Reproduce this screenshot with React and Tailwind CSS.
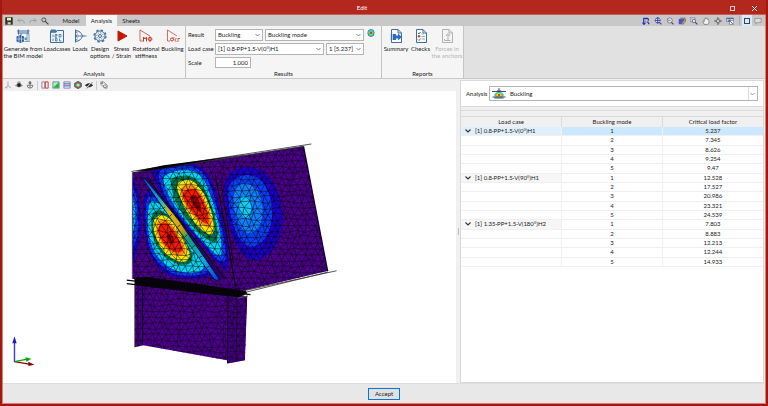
import React from "react";

/* ---------- geometry helpers for the finite element view ---------- */

// Closed smooth curve through a list of points.
function blob(points) {
  const n = points.length;
  let d = `M${points[0][0]} ${points[0][1]}`;
  for (let i = 0; i < n; i++) {
    const a = points[(i + n - 1) % n];
    const b = points[i];
    const c = points[(i + 1) % n];
    const e = points[(i + 2) % n];
    d += `C${b[0] + (c[0] - a[0]) / 6} ${b[1] + (c[1] - a[1]) / 6} ${c[0] - (e[0] - b[0]) / 6} ${c[1] - (e[1] - b[1]) / 6} ${c[0]} ${c[1]}`;
  }
  return d + "Z";
}

// Jittered triangular mesh covering a rectangle.
function mesh(x0, y0, x1, y1, step, seed) {
  let s = seed;
  const rnd = () => {
    s = (s * 1103515245 + 12345) % 2147483648;
    return s / 2147483648 - 0.5;
  };
  const rows = [];
  const h = step * 0.88;
  for (let y = y0, r = 0; y <= y1 + h; y += h, r++) {
    const row = [];
    for (let x = x0 - step; x <= x1 + step; x += step) {
      row.push([
        Math.round(x + (r % 2 ? step / 2 : 0) + rnd() * step * 0.5),
        Math.round(y + rnd() * step * 0.45),
      ]);
    }
    rows.push(row);
  }
  let d = "";
  const seg = (a, b) => {
    d += `M${a[0]} ${a[1]}L${b[0]} ${b[1]}`;
  };
  rows.forEach((row, r) => {
    row.forEach((p, i) => {
      if (row[i + 1]) seg(p, row[i + 1]);
      const next = rows[r + 1];
      if (!next) return;
      seg(p, next[i]);
      const diag = r % 2 ? next[i + 1] : next[i - 1];
      if (diag) seg(p, diag);
    });
  });
  return d;
}

const CONTOURS = [
  ["#1c00c4", [[158, 118], [200, 104], [270, 98], [318, 125], [346, 180], [366, 260], [384, 350], [381, 421], [350, 396], [296, 335], [236, 268], [190, 205], [165, 155]]],
  ["#0840f4", [[176, 126], [225, 111], [278, 109], [318, 140], [344, 205], [364, 290], [376, 360], [372, 396], [345, 382], [300, 330], [240, 262], [195, 200]]],
  ["#08d4f0", [[190, 142], [222, 123], [275, 122], [310, 148], [338, 215], [358, 295], [364, 368], [350, 374], [318, 345], [268, 290], [222, 226], [195, 172]]],
  ["#04744e", [[212, 152], [238, 137], [275, 139], [310, 170], [335, 230], [352, 300], [346, 336], [312, 322], [265, 276], [226, 214]]],
  ["#f8e808", [[230, 168], [250, 150], [280, 154], [310, 188], [334, 246], [343, 296], [328, 313], [292, 287], [254, 234]]],
  ["#fc8c04", [[241, 178], [260, 164], [285, 169], [309, 202], [328, 250], [332, 286], [316, 290], [284, 262], [252, 220]]],
  ["#f01c04", [[248, 188], [266, 176], [290, 182], [311, 215], [324, 254], [324, 280], [306, 274], [274, 244], [252, 210]]],
  ["#8c0000", [[270, 202], [286, 194], [299, 218], [303, 246], [284, 233]]],

  ["#1c00c4", [[130, 205], [152, 184], [200, 232], [262, 306], [318, 380], [334, 436], [268, 448], [198, 432], [150, 376], [130, 290]]],
  ["#0840f4", [[138, 215], [156, 198], [200, 242], [258, 312], [308, 382], [322, 424], [270, 438], [206, 425], [156, 372], [137, 295]]],
  ["#08d4f0", [[145, 228], [164, 214], [198, 244], [250, 310], [298, 384], [310, 416], [270, 429], [216, 418], [166, 372], [144, 305]]],
  ["#04744e", [[154, 256], [176, 240], [208, 262], [250, 322], [276, 376], [266, 402], [225, 400], [182, 368], [156, 315]]],
  ["#f8e808", [[160, 272], [182, 255], [214, 272], [252, 332], [268, 374], [254, 395], [224, 390], [186, 360], [163, 312]]],
  ["#fc8c04", [[168, 282], [188, 268], [216, 286], [245, 334], [255, 366], [236, 378], [204, 362], [175, 324]]],
  ["#f01c04", [[175, 290], [194, 278], [218, 298], [238, 333], [246, 362], [222, 366], [194, 346], [177, 316]]],
  ["#8c0000", [[199, 314], [212, 312], [222, 332], [214, 342], [202, 330]]],

  ["#1c00c4", [[372, 170], [392, 128], [432, 110], [490, 124], [532, 178], [550, 260], [536, 330], [504, 376], [452, 390], [414, 352], [386, 280]]],
  ["#0840f4", [[385, 180], [404, 148], [440, 134], [485, 152], [512, 205], [516, 270], [496, 324], [456, 350], [420, 326], [394, 262]]],
  ["#1080f8", [[400, 190], [416, 166], [444, 160], [474, 184], [488, 232], [480, 284], [450, 310], [422, 290], [404, 240]]],
  ["#10ccf4", [[418, 214], [432, 196], [448, 208], [454, 236], [446, 262], [430, 260], [419, 240]]],

  ["#1c00c4", [[80, 150], [106, 160], [118, 210], [122, 300], [108, 370], [80, 400]]],
  ["#0840f4", [[80, 165], [100, 180], [110, 220], [112, 300], [100, 345], [80, 360]]],
  ["#10a4f4", [[80, 190], [96, 205], [104, 245], [102, 290], [94, 315], [80, 320]]],
];

const BEAM = "M95 126L612 47L685 424L410 488L95 447Z";
const COLUMN = "M102 455L442 500L435 693L382 703L381 693L128 648L102 654Z";

function FeModel() {
  return (
    <svg className="block h-full w-full" viewBox="2 90 455 294" preserveAspectRatio="xMidYMid meet" role="img" aria-label="Buckling mode">
      <defs>
        <clipPath id="beam"><path d={BEAM} /></clipPath>
        <clipPath id="column"><path d={COLUMN} /></clipPath>
        <linearGradient id="stiffener" x1="0" y1="0" x2="1" y2="1">
          <stop offset="0" stopColor="#0838e0" />
          <stop offset=".22" stopColor="#0bb0d8" />
          <stop offset=".34" stopColor="#c8c020" />
          <stop offset=".5" stopColor="#d8a010" />
          <stop offset=".6" stopColor="#0a9c80" />
          <stop offset=".8" stopColor="#0bb0e0" />
          <stop offset="1" stopColor="#0838e0" />
        </linearGradient>
      </defs>
      <g transform="translate(100 130) scale(.33333)">
        <path d={COLUMN} fill="#4a0088" />
        <g clipPath="url(#column)">
          <path d="M384 490L442 496L435 693L382 703Z" fill="#42007c" />
          <path d={mesh(95, 440, 450, 710, 20, 71)} stroke="#0a0014" strokeWidth="1.500" fill="none" />
          <path d="M384 490L382 703M126 460V648" stroke="#080010" strokeWidth="2.500" />
          <path d="M112 460V650M412 500L408 698" stroke="#080010" strokeWidth="1.500" />
        </g>
        <path d={BEAM} fill="#4a0088" />
        <g clipPath="url(#beam)">
          {CONTOURS.map(([color, pts], i) => (
            <path key={i} d={blob(pts)} fill={color} />
          ))}
          <path d={mesh(85, 40, 690, 500, 20, 23)} stroke="#05000c" strokeWidth="1.500" fill="none" />
          <path d="M345 130Q378 300 410 488" stroke="#05000c" strokeWidth="3" fill="none" />
          <path d="M362 150Q385 300 400 400" stroke="#05000c" strokeWidth="2" fill="none" />
          <path d="M128 142L138 140L376 448L356 454Z" fill="#2a0068" />
          <path d="M138 140L376 448" stroke="#05000c" strokeWidth="3" />
        </g>
        <path d="M124 142L136 148L236 272L356 446L352 453L342 448L224 284Z" fill="url(#stiffener)" stroke="#05000c" strokeWidth="2" />
        <path d="M150 176l-4 4M172 202l-5 5M194 230l-6 5M215 252l-7 6M240 284l-9 7M262 314l-9 7M284 346l-9 7M306 378l-9 6M328 408l-8 6" stroke="#05000c" strokeWidth="2" />
        <path d="M92 123L636 40M95 127L612 47" stroke="#333" strokeWidth="2.500" />
        <path d="M108 121L190 104L330 86L450 70L330 90L220 108L140 122Z" fill="#050505" />
        <path d="M95 126V447M102 460V654" stroke="#555" strokeWidth="2" />
        <path d="M612 47L685 424" stroke="#170028" strokeWidth="4" />
        <path d="M415 487L712 423M400 497L686 427" stroke="#333" strokeWidth="2.500" />
        <path d="M100 444L140 442L300 464L438 484L442 492L418 502L350 496L200 478L104 466Z" fill="#08040c" />
        <path d="M78 451L452 495M78 462L420 501" stroke="#08040c" strokeWidth="4" />
        <path d="M412 506L444 499" stroke="#555" strokeWidth="3" />
      </g>
      <g strokeWidth="1.400" fill="none">
        <path d="M13 362.500L28 365" stroke="#8b0000" />
        <path d="M13 362.500L26 360" stroke="#00a800" />
        <path d="M13 363V342" stroke="#3a3ad8" />
      </g>
      <path d="M27 362.500L33 365.500L27 367Z" fill="#8b0000" />
      <path d="M24 358L30 359.500L25 362.500Z" fill="#00a800" />
      <path d="M13 337L15.200 344H10.800Z" fill="#1c1cc8" />
    </svg>
  );
}

/* ---------- icons ---------- */

function Svg({ children, className = "size-[14px]", box = "0 0 28 28" }) {
  return (
    <svg className={`block shrink-0 ${className}`} viewBox={box} fill="none" stroke="#3d6d9e" strokeWidth="2" aria-hidden="true">
      {children}
    </svg>
  );
}

const IconBim = () => (
  <Svg>
    <path d="M2 4H27M3 8H26M5 1V11M24 1V11" />
    <path d="M22 9V24M26 9V26M17 25H27" stroke="#7fa0c4" />
    <path d="M1 15L9 12L16 15V25L9 28L1 25Z" fill="#2f62a0" stroke="none" />
    <path d="M1 20H16M6 13V27M11 13V27" stroke="#c9daee" strokeWidth="1.500" />
    <path d="M10 9V12" />
    <path d="M17 17h5v5h-5z" fill="#69a" stroke="none" />
  </Svg>
);
const IconLoadcases = () => (
  <Svg>
    <path d="M1 5V27H27V3H14L12 6H1Z" fill="#eef4fb" />
    <path d="M2 2H11L13 6H2Z" fill="#5d8ab8" />
    <path d="M6 11v5M10 11h4v2.500h-4v3h4M18 11h4v5h-4zM6 19v5M11 19h3v5h-3zM19 19v5h4" strokeWidth="1.600" />
  </Svg>
);
const IconLoads = () => (
  <Svg>
    <path d="M5 1V27M5 3Q16 4 19 14Q16 24 5 25" />
    <path d="M5 14H27M9 11L5 14L9 17M5 5l4 3M5 23l4-3" strokeWidth="1.800" />
  </Svg>
);
const IconDesign = () => (
  <Svg>
    <circle cx="14" cy="14" r="10" />
    <circle cx="14" cy="14" r="12" strokeDasharray="5 4.400" strokeWidth="2.500" />
    <circle cx="14" cy="14" r="3" />
    <circle cx="14" cy="14" r="6.500" strokeDasharray="3 2" strokeWidth="1.500" />
  </Svg>
);
const IconStress = () => (
  <Svg><path d="M6 4L24 14L6 24Z" fill="#c01808" stroke="#c01808" /></Svg>
);
const IconRotational = () => (
  <Svg>
    <g stroke="#cc3a2c">
      <path d="M2 2V24H9M2 2L22 14" strokeWidth="1.500" />
      <path d="M9 25V16L12 20L15 16V25" />
      <ellipse cx="22" cy="20" rx="4" ry="3" />
      <path d="M22 15V26" />
    </g>
  </Svg>
);
const IconBuckling = () => (
  <Svg>
    <g stroke="#cc3a2c">
      <path d="M3 2V24H8M3 2L22 14" strokeWidth="1.500" />
      <circle cx="12" cy="21" r="3" />
      <path d="M12 18h5M21 19q-3 0-3 3t3 3M24 26v-7h4" strokeWidth="1.600" />
    </g>
  </Svg>
);
const IconSummary = () => (
  <Svg>
    <path d="M5 1H18L25 8V27H5Z" fill="#fff" />
    <path d="M18 1V8H25" />
    <path d="M8 10h6v3h4v-4l8 7l-8 7v-4h-4v3H8z" fill="#2a6fc4" stroke="none" />
    <path d="M3 12h7M3 16h8M3 20h7" strokeWidth="1.500" />
  </Svg>
);
const IconChecks = () => (
  <Svg>
    <path d="M5 1H18L25 8V27H5Z" fill="#fff" />
    <path d="M18 1V8H25" />
    <path d="M8 8l2 2l3-4" stroke="#2a9a3a" />
    <path d="M8 13h4v3H8z" fill="#c33" stroke="#c33" strokeWidth="1" />
    <path d="M8 21l2 2l3-4" stroke="#2a9a3a" />
    <path d="M15 10h5M15 15h7M15 20h7" stroke="#789" strokeWidth="1.500" />
  </Svg>
);
const IconForces = () => (
  <Svg>
    <g stroke="#b0b0b0">
      <path d="M5 1H18L25 8V27H5Z" />
      <path d="M18 1V8H25M16 23V10M12 14L16 9L20 14M9 20v3h12" />
    </g>
  </Svg>
);

const small = "size-[8px]";
const dark = { stroke: "#333" };

const VIEW_TOOLS = [
  ["Orbit", <g stroke="#5a8098"><path d="M14 2V16L3 25M14 16L25 25M8 24h5" /></g>],
  ["Look", <g {...dark}><path d="M2 16Q14 4 26 16Q14 26 2 16Z" /><circle cx="14" cy="14" r="6" fill="#222" /><path d="M8 4h12" /></g>],
  ["Anchor", <g {...dark}><path d="M14 2V24M4 15Q4 25 14 25Q24 25 24 15ZM9 8h10" /><circle cx="14" cy="5" r="3" /></g>],
  null,
  ["Section", <g><path d="M3 3H13V25H3Z" stroke="#357" /><path d="M15 3H25V25H15Z" stroke="#e02020" strokeWidth="3" /></g>],
  ["Surface", <g><path d="M3 3H25V25H3Z" fill="#aef0b8" stroke="#357" /><path d="M4 24L24 4V24Z" fill="#1fb04a" stroke="none" /></g>],
  ["Levels", <g stroke="#44508c"><path d="M3 3H25V25H3Z" fill="#e6e4ff" /><path d="M3 10H25M3 17H25" strokeWidth="3" /></g>],
  ["Solid", <g><path d="M14 1L26 8V20L14 27L2 20V8Z" fill="#777" stroke="#333" /><path d="M14 7L21 11V18L14 21L7 18V11Z" fill="#8fa" stroke="#a33" /></g>],
  ["Hide", <g stroke="#222"><path d="M1 15Q14 3 27 15Q14 27 1 15Z" fill="#222" /><path d="M4 26L24 4" stroke="#f0f0f0" strokeWidth="4" /><path d="M6 26L26 4" /></g>],
  null,
  ["Attributes", <g stroke="#555"><path d="M3 3H13L25 15V25H17L3 12Z" /><circle cx="17" cy="18" r="5" /><path d="M3 8h8M8 3v8" /></g>],
];

const lens = (extra) => (
  <g stroke="#445">
    <circle cx="13" cy="12" r="9" fill="#e4e8f4" />
    <path d="M19 19L26 26" strokeWidth="4" />
    {extra}
  </g>
);
const ZOOM_TOOLS = [
  ["Previous view", <g><path d="M6 26V5H20Q26 10 18 14L25 25M2 20l5 6l5-6" stroke="#2430c0" strokeWidth="4" /><circle cx="16" cy="13" r="5" fill="#dde" stroke="#556" /></g>],
  ["Zoom all", lens(<path d="M13 2V22M3 12H23M9 6l4-4l4 4M9 18l4 4l4-4" stroke="#2430c0" strokeWidth="3" />)],
  ["Zoom window", lens(<path d="M8 12h10M10 8v8" stroke="#6670c8" />)],
  ["Redraw", <g><path d="M4 8H20V24H4Z" fill="#4058d8" stroke="#2430c0" /><path d="M8 4H25V18" stroke="#333" /><path d="M12 22L25 9L27 14L17 25Z" fill="#e0a830" stroke="#765" /></g>],
  ["Zoom selection", <g><path d="M2 2H18V18H2Z" stroke="#5866b8" strokeDasharray="4 2" /><circle cx="14" cy="14" r="6" fill="#dde" stroke="#445" /><path d="M18 19l8 7" stroke="#445" strokeWidth="4" /></g>],
  ["Pan", <path d="M8 26L3 15Q4 12 8 16V7Q10 4 12 7V4Q14 1 16 4V6Q19 3 20 7V10Q24 7 24 12V20L20 26Z" fill="#f4f4f4" stroke="#555" />],
  ["Rotate", <g stroke="#444"><path d="M14 2V26M2 14H26M10 6l4-4l4 4M10 22l4 4l4-4M6 10l-4 4l4 4M22 10l4 4l-4 4" /><circle cx="14" cy="14" r="6" fill="#ccc" /></g>],
  ["Windows", <g><path d="M2 4H26V16H2Z" fill="#cdd6f4" stroke="#567" /><path d="M2 5H26" stroke="#456" strokeWidth="3" /><path d="M12 12H27V26H12Z" fill="#fff" stroke="#567" /><path d="M24 24L10 11M10 17V11H16" stroke="#2040d0" strokeWidth="3" /></g>],
];

const Chevron = ({ className = "text-[#777]" }) => (
  <svg className={`pointer-events-none absolute right-[3px] top-1/2 h-[4px] w-[5px] -translate-y-1/2 ${className}`} viewBox="0 0 10 8" fill="none" stroke="currentColor" strokeWidth="1.800" aria-hidden="true">
    <path d="M1 2L5 6L9 2" />
  </svg>
);

/* ---------- controls ---------- */

function Choice({ id, label, value, className }) {
  return (
    <span className={`relative block ${className}`}>
      <select id={id} aria-label={label} defaultValue={value} className="block h-[12px] w-full appearance-none border border-[#b4b4b4] bg-white pl-[2px] leading-[8px] outline-none">
        <option>{value}</option>
      </select>
      <Chevron />
    </span>
  );
}

function Tool({ icon, lines, className, disabled }) {
  return (
    <button type="button" disabled={disabled} className={`flex shrink-0 flex-col items-center gap-[2px] whitespace-nowrap ${disabled ? "text-[#b4b4b4]" : ""} ${className}`}>
      {icon}
      <span className="block leading-[7px]">
        {lines.map((t) => <span key={t} className="block">{t}</span>)}
      </span>
    </button>
  );
}

function Group({ title, children, className = "" }) {
  return (
    <section className={`flex shrink-0 flex-col justify-between border-r border-[#c4c4c4] bg-[#f5f5f5] pt-[3px] ${className}`}>
      {children}
      <h2 className="text-center leading-[9px]">{title}</h2>
    </section>
  );
}

const RIBBON = [
  [<IconBim />, ["Generate from", "the BIM model"], "w-[40px]"],
  [<IconLoadcases />, ["Loadcases"], "w-[28px]"],
  [<IconLoads />, ["Loads"], "w-[18px]"],
  [<IconDesign />, ["Design", "options"], "w-[22px]"],
  [<IconStress />, ["Stress", "/ Strain"], "w-[21px]"],
  [<IconRotational />, ["Rotational", "stiffness"], "w-[28px]"],
  [<IconBuckling />, ["Buckling"], "w-[25px]"],
];

const CASES = [
  ["[1] 0.8·PP+1.5·V(0°)H1", ["5.237", "7.345", "8.626", "9.254", "9.47"]],
  ["[1] 0.8·PP+1.5·V(90°)H1", ["12.528", "17.527", "20.986", "23.321", "24.539"]],
  ["[1] 1.35·PP+1.5·V(180°)H2", ["7.803", "8.883", "12.213", "12.244", "14.933"]],
];

function ResultsTable() {
  return (
    <table className="h-[150px] w-full table-fixed border-collapse text-center leading-[8px]">
      <thead className="bg-[#f0f0f0]">
        <tr className="h-[10px]">
          <th className="border-r border-[#dcdcdc] font-normal">Load case</th>
          <th className="border-r border-[#dcdcdc] font-normal">Buckling mode</th>
          <th className="font-normal">Critical load factor</th>
        </tr>
      </thead>
      <tbody>
        {CASES.map(([name, factors], c) =>
          factors.map((f, i) => {
            const selected = c === 0 && i === 0;
            return (
              <tr key={name + f} className={`border-b border-[#f0f0f0] ${selected ? "bg-[#cce8ff]" : ""}`}>
                <td className={`whitespace-nowrap border-r border-[#f0f0f0] ${i ? "" : selected ? "bg-[#e1effa]" : "bg-[#f6f6f6]"}`}>
                  {i === 0 && (
                    <span className="flex items-center gap-[4px] pl-[4px]">
                      <svg className="h-[4px] w-[6px]" viewBox="0 0 12 8" fill="none" stroke="#333" strokeWidth="2.200" aria-hidden="true"><path d="M1 1L6 6L11 1" /></svg>
                      {name}
                    </span>
                  )}
                </td>
                <td className="border-r border-[#f0f0f0]">{i + 1}</td>
                <td>{f}</td>
              </tr>
            );
          })
        )}
      </tbody>
    </table>
  );
}

export default function App() {
  return (
    <div className="flex h-screen flex-col border-2 border-t-0 border-[#a01810] bg-[#f0f0f0] font-['Lato','Open_Sans',sans-serif] text-[6px] leading-[8px] text-[#222]">
      <header className="flex h-[15px] shrink-0 items-center border-b border-[#c86058] bg-[#b2281e] pt-[2px] text-white">
        <h1 className="flex-1 text-center">Edit</h1>
        <div className="flex w-[44px] items-center justify-end gap-[17px] pr-[9px]">
          <button type="button" aria-label="Maximize"><span className="block size-[5px] border border-[#f0cfcc]" /></button>
          <button type="button" aria-label="Close">
            <svg className="block size-[5px]" viewBox="0 0 10 10" stroke="#fff" strokeWidth="1.800"><path d="M0 0L10 10M10 0L0 10" /></svg>
          </button>
        </div>
      </header>

      <div className="flex min-h-0 flex-1 flex-col border-x border-b border-[#d8807a]">
        <nav className="flex h-[11px] shrink-0 items-center bg-[#c8c8c8]">
          <div className="flex w-[53px] items-center gap-[4px] pl-[2px]">
            <button type="button" aria-label="Save"><Svg className={small}><path d="M2 2H26V26H2Z" fill="#2e3420" stroke="#2e3420" /><path d="M7 3H21V12H7Z" fill="#e8f0b8" stroke="none" /><path d="M9 18H20V26H9Z" fill="#ccc" stroke="none" /></Svg></button>
            <button type="button" aria-label="Undo"><Svg className={small}><path d="M10 5L3 12L10 19M4 12H20Q26 14 25 22" stroke="#999" strokeWidth="3" /></Svg></button>
            <button type="button" aria-label="Redo"><Svg className={small}><path d="M18 5L25 12L18 19M24 12H8Q2 14 3 22" stroke="#999" strokeWidth="3" /></Svg></button>
            <button type="button" aria-label="Search"><Svg className={small}><circle cx="10" cy="10" r="7" stroke="#444" strokeWidth="3" /><path d="M15 15L26 26" stroke="#444" strokeWidth="4" /></Svg></button>
          </div>
          <button type="button" className="h-full w-[30px]">Model</button>
          <button type="button" className="h-full w-[31px] bg-[#f5f5f5]">Analysis</button>
          <button type="button" className="h-full w-[28px]">Sheets</button>
          <div className="ml-auto flex h-full items-center gap-[4px]">
            {ZOOM_TOOLS.map(([name, art]) => (
              <button key={name} type="button" aria-label={name}><Svg className={small}>{art}</Svg></button>
            ))}
            <div className="ml-[1px] h-[9px] w-px bg-[#aaa]" />
            <div className="-ml-[2px] flex h-full items-center gap-[2px]">
              <button type="button" aria-label="Frame" className="flex h-full w-[10px] items-center justify-center bg-[#d9ebf9]"><span className="block size-[6px] border border-[#345]" /></button>
              <button type="button" aria-label="Comments" className="pr-[3px]"><Svg className={small}><path d="M3 5H25V19H13L7 25V19H3Z" fill="#ddd" stroke="#777" /></Svg></button>
            </div>
          </div>
        </nav>

        <div className="flex h-[53px] shrink-0 border-b border-[#c8c8c8] bg-[#e1e1e1]">
          <Group title="Analysis">
            <div className="flex items-start">
              {RIBBON.map(([icon, lines, w]) => <Tool key={lines[0]} icon={icon} lines={lines} className={w} />)}
            </div>
          </Group>
          <Group title="Results" className="w-[196px]">
            <div className="flex flex-col gap-[2px] pl-[2px]">
              <div className="flex items-center">
                <label htmlFor="result" className="w-[27px]">Result</label>
                <Choice id="result" value="Buckling" className="w-[48px]" />
                <Choice label="Result type" value="Buckling mode" className="ml-[2px] w-[99px]" />
                <button type="button" aria-label="Colour scale" className="ml-[3px] -mt-[4px]">
                  <Svg className={small}>
                    <ellipse cx="14" cy="14" rx="12" ry="13" fill="#1a58e8" stroke="none" />
                    <ellipse cx="14" cy="14" rx="10" ry="11" fill="#18d8e0" stroke="none" />
                    <ellipse cx="14" cy="14" rx="8" ry="9" fill="#30e030" stroke="none" />
                    <ellipse cx="14" cy="14" rx="5" ry="7" fill="#f0e020" stroke="none" />
                    <ellipse cx="14" cy="14" rx="3" ry="5" fill="#e01010" stroke="none" />
                  </Svg>
                </button>
              </div>
              <div className="flex items-center">
                <label htmlFor="case" className="w-[27px] whitespace-nowrap">Load case</label>
                <Choice id="case" value="[1] 0.8·PP+1.5·V(0°)H1" className="w-[109px]" />
                <Choice label="Mode" value="1 [5.237]" className="ml-[2px] w-[38px]" />
              </div>
              <div className="flex items-center">
                <label htmlFor="scale" className="w-[27px]">Scale</label>
                <input id="scale" defaultValue="1.000" className="h-[11px] w-[36px] border border-[#b4b4b4] bg-white pr-[2px] text-right outline-none" />
              </div>
            </div>
          </Group>
          <Group title="Reports">
            <div className="flex items-start">
              <Tool icon={<IconSummary />} lines={["Summary"]} className="w-[28px]" />
              <Tool icon={<IconChecks />} lines={["Checks"]} className="w-[21px]" />
              <Tool icon={<IconForces />} lines={["Forces in", "the anchors"]} className="w-[32px]" disabled />
            </div>
          </Group>
        </div>

        <main className="flex min-h-0 flex-1">
          <div className="flex min-w-0 flex-[3] flex-col">
            <div className="flex h-[12px] shrink-0 items-center gap-[3px] pl-[1px]">
              {VIEW_TOOLS.map((t, i) =>
                t ? (
                  <button key={i} type="button" aria-label={t[0]}><Svg className={small}>{t[1]}</Svg></button>
                ) : (
                  <div key={i} className="h-[9px] w-px bg-[#ccc]" />
                )
              )}
            </div>
            <div className="min-h-0 flex-1 bg-white"><FeModel /></div>
          </div>
          <div className="flex w-[4px] flex-col items-center justify-center">
            <div className="h-[7px] w-px bg-[#bbb]" />
          </div>
          <aside className="mt-px flex min-w-0 flex-[2] flex-col border-x border-t border-[#dadada]">
            <div className="flex h-[26px] shrink-0 items-center border-b border-[#dadada] bg-white pl-[5px] pr-[5px]">
              <label htmlFor="analysis" className="w-[23px] shrink-0">Analysis</label>
              <div className="relative min-w-0 flex-1">
                <select id="analysis" defaultValue="Buckling" className="block h-[15px] w-full appearance-none border border-[#b4b4b4] bg-white pl-[20px] outline-none">
                  <option>Buckling</option>
                </select>
                <svg className="pointer-events-none absolute left-[3px] top-[2px] h-[11px] w-[14px]" viewBox="0 0 28 22" fill="none" aria-hidden="true">
                  <path d="M5 12Q14 2 23 12V17H5Z" fill="#38a8f0" />
                  <ellipse cx="14" cy="14" rx="7" ry="5" fill="#48e048" />
                  <ellipse cx="14" cy="14" rx="5" ry="3.500" fill="#f4e020" />
                  <ellipse cx="14" cy="14" rx="2.500" ry="2" fill="#e82010" />
                  <path d="M0 7H28M14 0V6M11 4L14 8L17 4M1 18H27M5 20H23" stroke="#336" strokeWidth="1.800" />
                </svg>
                <div className="pointer-events-none absolute inset-y-[1px] right-[9px] w-px bg-[#ddd]" />
                <Chevron className="text-[#888]" />
              </div>
            </div>
            <div className="mt-[3px] h-px shrink-0 bg-[#dadada]" />
            <div className="mt-[5px] min-h-0 flex-1 border-y border-[#dadada] bg-white">
              <ResultsTable />
            </div>
          </aside>
          <div className="w-px" />
        </main>

        <footer className="flex h-[20px] shrink-0 items-center justify-center border-t border-[#dedede] bg-[#e8e8e8]">
          <button type="button" className="h-[12px] w-[32px] border border-[#0078d7] bg-[#e1e1e1]">Accept</button>
        </footer>
      </div>
    </div>
  );
}
